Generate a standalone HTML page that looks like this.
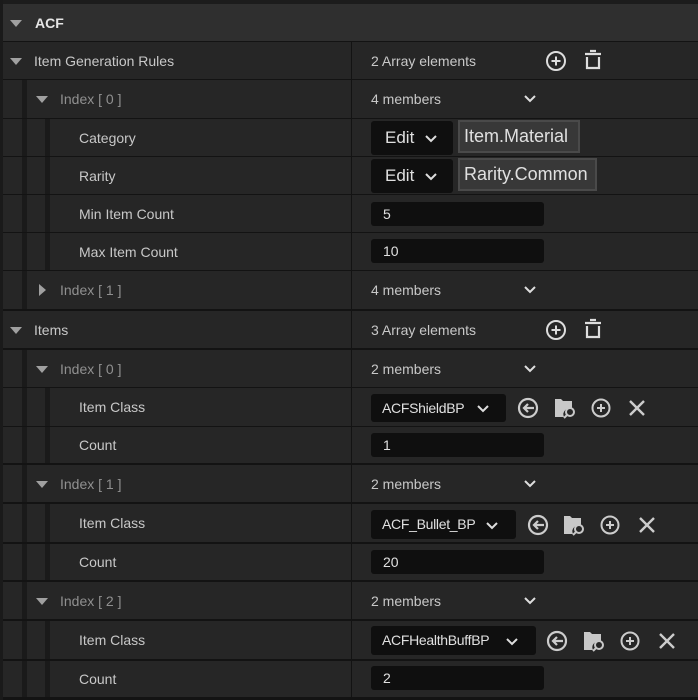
<!DOCTYPE html>
<html><head><meta charset="utf-8"><style>
*{margin:0;padding:0;box-sizing:border-box}
body{width:698px;height:700px;background:#131313;position:relative;overflow:hidden;font-family:"Liberation Sans",sans-serif;font-size:14px;color:#c8c8c8}
.r{position:absolute;left:0;width:698px;background:#262626}
.r .t{position:absolute;top:50%;transform:translateY(-50%);white-space:nowrap}
.lb{left:79px}
.v{left:371px}
.gr{color:#909090}
.bar{position:absolute;top:0;bottom:0;width:5px;background:#1a1a1a}
.split{position:absolute;left:351px;top:0;bottom:0;width:1px;background:#131313}
.tri{position:absolute;top:50%;width:0;height:0;border-left:6px solid transparent;border-right:6px solid transparent;border-top:7px solid #a0a0a0;margin-top:-3px}
.trir{position:absolute;top:50%;width:0;height:0;border-top:6px solid transparent;border-bottom:6px solid transparent;border-left:7px solid #a0a0a0;margin-top:-6px}
.box{position:absolute;background:#0f0f0f;border-radius:3px;color:#e0e0e0}
.tag{position:absolute;background:#383838;border:2px solid #4a4a4a;color:#e0e0e0;font-size:18px;padding:0 4px;line-height:29px;white-space:nowrap}
svg{position:absolute}
</style></head><body>
<div class="r" style="top:0;height:4px;background:#1c1c1c"></div>
<div class="r" style="top:4px;height:37px;background:#2f2f2f"><div class="tri" style="left:10px"></div><span class="t" style="left:35px;font-weight:bold;color:#e6e6e6">ACF</span></div>

<div class="r" style="top:42px;height:37px"><div class="split"></div><div class="tri" style="left:10px"></div><span class="t" style="left:34px">Item Generation Rules</span><span class="t v">2 Array elements</span>
<svg style="left:545px;top:8px" width="22" height="22" viewBox="0 0 22 22"><circle cx="11" cy="11" r="9" fill="none" stroke="#ddd" stroke-width="2"/><path d="M11 6.5v9M6.5 11h9" stroke="#ddd" stroke-width="2"/></svg>
<svg style="left:583px;top:7px" width="20" height="22" viewBox="0 0 20 22"><path d="M7 2h6M2 5h16" stroke="#ddd" stroke-width="2.2"/><path d="M4 8v11h12V8" fill="none" stroke="#ddd" stroke-width="2.2"/></svg></div>

<div class="r" style="top:80px;height:38px"><div class="split"></div><div class="bar" style="left:22px"></div><div class="tri" style="left:36px"></div><span class="t gr" style="left:60px">Index [ 0 ]</span><span class="t v">4 members</span>
<svg style="left:523px;top:14px" width="14" height="10"><path d="M2 2l5 5 5-5" fill="none" stroke="#ddd" stroke-width="2"/></svg></div>

<div class="r" style="top:119px;height:37px"><div class="split"></div><div class="bar" style="left:22px"></div><div class="bar" style="left:45px"></div><span class="t lb">Category</span>
<div class="box" style="left:371px;top:2px;width:82px;height:34px"><span style="position:absolute;left:14px;top:7px;font-size:17px">Edit</span><svg style="left:53px;top:13px" width="14" height="10"><path d="M2 2l5 5 5-5" fill="none" stroke="#ddd" stroke-width="2"/></svg></div>
<div class="tag" style="left:458px;top:1px;height:33px;width:122px">Item.Material</div></div>

<div class="r" style="top:157px;height:37px"><div class="split"></div><div class="bar" style="left:22px"></div><div class="bar" style="left:45px"></div><span class="t lb">Rarity</span>
<div class="box" style="left:371px;top:2px;width:82px;height:34px"><span style="position:absolute;left:14px;top:7px;font-size:17px">Edit</span><svg style="left:53px;top:13px" width="14" height="10"><path d="M2 2l5 5 5-5" fill="none" stroke="#ddd" stroke-width="2"/></svg></div>
<div class="tag" style="left:458px;top:1px;height:33px;width:139px">Rarity.Common</div></div>

<div class="r" style="top:195px;height:37px"><div class="split"></div><div class="bar" style="left:22px"></div><div class="bar" style="left:45px"></div><span class="t lb">Min Item Count</span>
<div class="box" style="left:371px;top:7px;width:173px;height:24px"><span style="position:absolute;left:12px;top:4px">5</span></div></div>

<div class="r" style="top:233px;height:37px"><div class="split"></div><div class="bar" style="left:22px"></div><div class="bar" style="left:45px"></div><span class="t lb">Max Item Count</span>
<div class="box" style="left:371px;top:6px;width:173px;height:24px"><span style="position:absolute;left:12px;top:4px">10</span></div></div>

<div class="r" style="top:271px;height:38px"><div class="split"></div><div class="bar" style="left:22px"></div><div class="trir" style="left:39px"></div><span class="t gr" style="left:60px">Index [ 1 ]</span><span class="t v">4 members</span>
<svg style="left:523px;top:14px" width="14" height="10"><path d="M2 2l5 5 5-5" fill="none" stroke="#ddd" stroke-width="2"/></svg></div>

<div class="r" style="top:311px;height:37px"><div class="split"></div><div class="tri" style="left:10px"></div><span class="t" style="left:34px">Items</span><span class="t v">3 Array elements</span>
<svg style="left:545px;top:8px" width="22" height="22" viewBox="0 0 22 22"><circle cx="11" cy="11" r="9" fill="none" stroke="#ddd" stroke-width="2"/><path d="M11 6.5v9M6.5 11h9" stroke="#ddd" stroke-width="2"/></svg>
<svg style="left:583px;top:7px" width="20" height="22" viewBox="0 0 20 22"><path d="M7 2h6M2 5h16" stroke="#ddd" stroke-width="2.2"/><path d="M4 8v11h12V8" fill="none" stroke="#ddd" stroke-width="2.2"/></svg></div>

<div class="r" style="top:350px;height:37px"><div class="split"></div><div class="bar" style="left:22px"></div><div class="tri" style="left:36px"></div><span class="t gr" style="left:60px">Index [ 0 ]</span><span class="t v">2 members</span>
<svg style="left:523px;top:14px" width="14" height="10"><path d="M2 2l5 5 5-5" fill="none" stroke="#ddd" stroke-width="2"/></svg></div>

<div class="r" style="top:388px;height:38px"><div class="split"></div><div class="bar" style="left:22px"></div><div class="bar" style="left:45px"></div><span class="t lb">Item Class</span>
<div class="box" style="left:371px;top:6px;width:135px;height:28px"><span style="position:absolute;left:11px;top:6px;font-size:14px;letter-spacing:-0.3px">ACFShieldBP</span><svg style="left:105px;top:10px" width="14" height="10"><path d="M2 2l5 5 5-5" fill="none" stroke="#ddd" stroke-width="2"/></svg></div>
<svg style="left:517px;top:9px" width="22" height="22" viewBox="0 0 22 22"><circle cx="11" cy="11" r="9" fill="none" stroke="#ccc" stroke-width="2.2"/><path d="M17 11H7M11 7l-4 4 4 4" fill="none" stroke="#ccc" stroke-width="2.2"/></svg>
<svg style="left:553px;top:8px" width="24" height="24" viewBox="0 0 24 24"><path d="M2 3h6l2 2h9v8a6 6 0 0 0-8 8H2z" fill="#c8c8c8"/><circle cx="17" cy="16" r="4" fill="none" stroke="#c8c8c8" stroke-width="2"/><path d="M14 19l-3 3" stroke="#c8c8c8" stroke-width="2"/></svg>
<svg style="left:591px;top:10px" width="20" height="20" viewBox="0 0 20 20"><circle cx="10" cy="10" r="8.5" fill="none" stroke="#ccc" stroke-width="2"/><path d="M10 6v8M6 10h8" stroke="#ccc" stroke-width="2"/></svg>
<svg style="left:628px;top:11px" width="18" height="18" viewBox="0 0 18 18"><path d="M2 2l14 14M16 2L2 16" stroke="#ccc" stroke-width="2.4"/></svg></div>

<div class="r" style="top:427px;height:36px"><div class="split"></div><div class="bar" style="left:22px"></div><div class="bar" style="left:45px"></div><span class="t lb">Count</span>
<div class="box" style="left:371px;top:6px;width:173px;height:24px"><span style="position:absolute;left:12px;top:4px">1</span></div></div>

<div class="r" style="top:465px;height:37px"><div class="split"></div><div class="bar" style="left:22px"></div><div class="tri" style="left:36px"></div><span class="t gr" style="left:60px">Index [ 1 ]</span><span class="t v">2 members</span>
<svg style="left:523px;top:14px" width="14" height="10"><path d="M2 2l5 5 5-5" fill="none" stroke="#ddd" stroke-width="2"/></svg></div>

<div class="r" style="top:504px;height:38px"><div class="split"></div><div class="bar" style="left:22px"></div><div class="bar" style="left:45px"></div><span class="t lb">Item Class</span>
<div class="box" style="left:371px;top:6px;width:145px;height:29px"><span style="position:absolute;left:11px;top:6px;font-size:14px;letter-spacing:-0.3px">ACF_Bullet_BP</span><svg style="left:114px;top:11px" width="14" height="10"><path d="M2 2l5 5 5-5" fill="none" stroke="#ddd" stroke-width="2"/></svg></div>
<svg style="left:527px;top:10px" width="22" height="22" viewBox="0 0 22 22"><circle cx="11" cy="11" r="9" fill="none" stroke="#ccc" stroke-width="2.2"/><path d="M17 11H7M11 7l-4 4 4 4" fill="none" stroke="#ccc" stroke-width="2.2"/></svg>
<svg style="left:562px;top:9px" width="24" height="24" viewBox="0 0 24 24"><path d="M2 3h6l2 2h9v8a6 6 0 0 0-8 8H2z" fill="#c8c8c8"/><circle cx="17" cy="16" r="4" fill="none" stroke="#c8c8c8" stroke-width="2"/><path d="M14 19l-3 3" stroke="#c8c8c8" stroke-width="2"/></svg>
<svg style="left:600px;top:11px" width="20" height="20" viewBox="0 0 20 20"><circle cx="10" cy="10" r="8.5" fill="none" stroke="#ccc" stroke-width="2"/><path d="M10 6v8M6 10h8" stroke="#ccc" stroke-width="2"/></svg>
<svg style="left:638px;top:12px" width="18" height="18" viewBox="0 0 18 18"><path d="M2 2l14 14M16 2L2 16" stroke="#ccc" stroke-width="2.4"/></svg></div>

<div class="r" style="top:544px;height:36px"><div class="split"></div><div class="bar" style="left:22px"></div><div class="bar" style="left:45px"></div><span class="t lb">Count</span>
<div class="box" style="left:371px;top:6px;width:173px;height:24px"><span style="position:absolute;left:12px;top:4px">20</span></div></div>

<div class="r" style="top:582px;height:37px"><div class="split"></div><div class="bar" style="left:22px"></div><div class="tri" style="left:36px"></div><span class="t gr" style="left:60px">Index [ 2 ]</span><span class="t v">2 members</span>
<svg style="left:523px;top:14px" width="14" height="10"><path d="M2 2l5 5 5-5" fill="none" stroke="#ddd" stroke-width="2"/></svg></div>

<div class="r" style="top:621px;height:38px"><div class="split"></div><div class="bar" style="left:22px"></div><div class="bar" style="left:45px"></div><span class="t lb">Item Class</span>
<div class="box" style="left:371px;top:5px;width:165px;height:29px"><span style="position:absolute;left:11px;top:6px;font-size:14px;letter-spacing:-0.3px">ACFHealthBuffBP</span><svg style="left:134px;top:11px" width="14" height="10"><path d="M2 2l5 5 5-5" fill="none" stroke="#ddd" stroke-width="2"/></svg></div>
<svg style="left:546px;top:9px" width="22" height="22" viewBox="0 0 22 22"><circle cx="11" cy="11" r="9" fill="none" stroke="#ccc" stroke-width="2.2"/><path d="M17 11H7M11 7l-4 4 4 4" fill="none" stroke="#ccc" stroke-width="2.2"/></svg>
<svg style="left:582px;top:8px" width="24" height="24" viewBox="0 0 24 24"><path d="M2 3h6l2 2h9v8a6 6 0 0 0-8 8H2z" fill="#c8c8c8"/><circle cx="17" cy="16" r="4" fill="none" stroke="#c8c8c8" stroke-width="2"/><path d="M14 19l-3 3" stroke="#c8c8c8" stroke-width="2"/></svg>
<svg style="left:620px;top:10px" width="20" height="20" viewBox="0 0 20 20"><circle cx="10" cy="10" r="8.5" fill="none" stroke="#ccc" stroke-width="2"/><path d="M10 6v8M6 10h8" stroke="#ccc" stroke-width="2"/></svg>
<svg style="left:658px;top:11px" width="18" height="18" viewBox="0 0 18 18"><path d="M2 2l14 14M16 2L2 16" stroke="#ccc" stroke-width="2.4"/></svg></div>

<div class="r" style="top:661px;height:36px"><div class="split"></div><div class="bar" style="left:22px"></div><div class="bar" style="left:45px"></div><span class="t lb">Count</span>
<div class="box" style="left:371px;top:5px;width:173px;height:24px"><span style="position:absolute;left:12px;top:4px">2</span></div></div>
<div style="position:absolute;left:0;top:0;width:3px;height:700px;background:#1a1a1a"></div>
</body></html>
